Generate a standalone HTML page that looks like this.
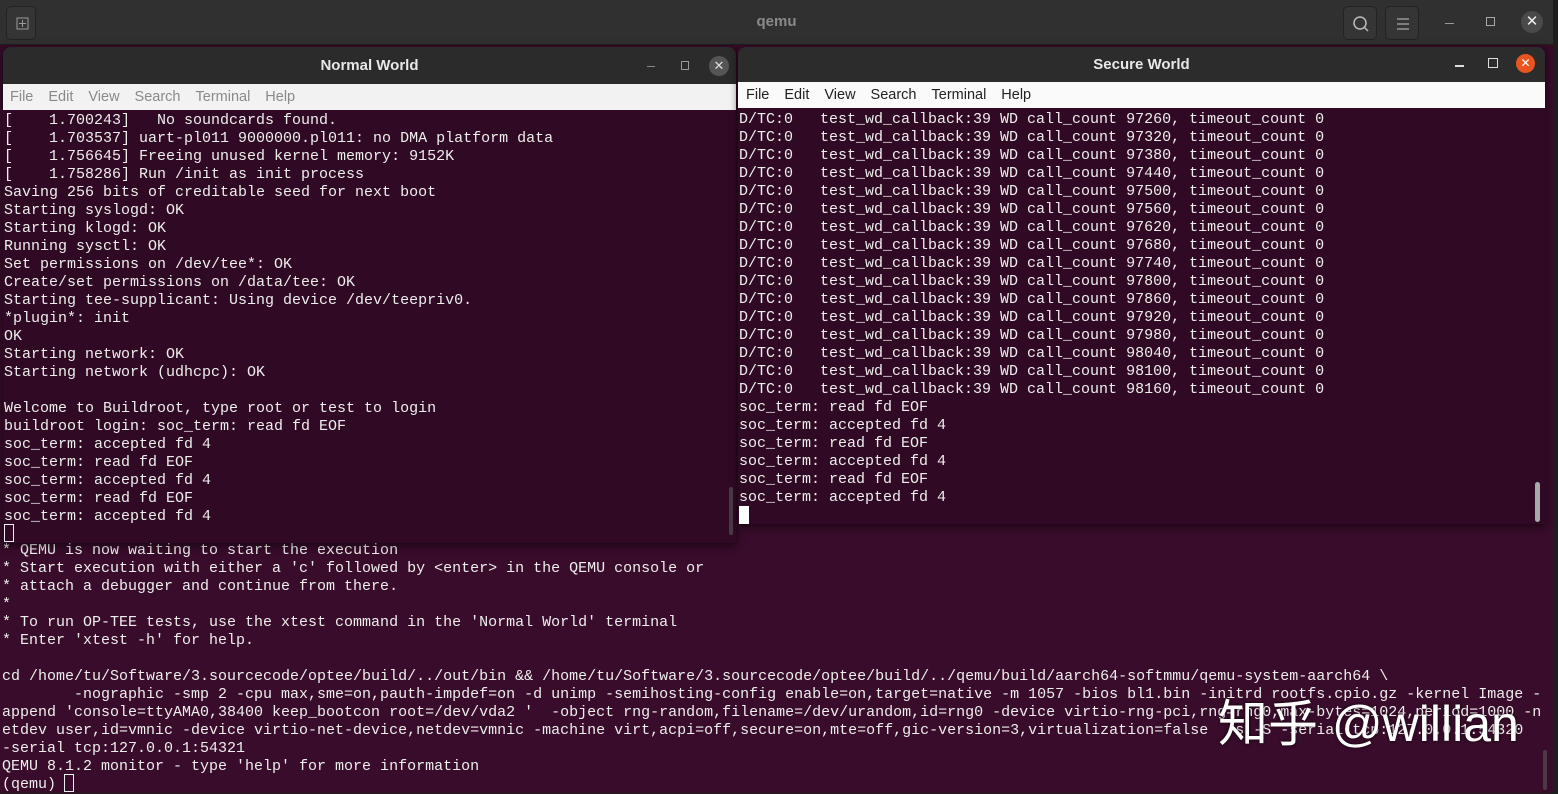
<!DOCTYPE html>
<html><head><meta charset="utf-8"><style>
*{margin:0;padding:0;box-sizing:border-box}
body{width:1558px;height:793px;overflow:hidden;background:#1e1e1e;position:relative;font-family:"Liberation Sans",sans-serif}
.mono{font-family:"Liberation Mono",monospace;font-size:15px;line-height:18px;color:#eeeeec;white-space:pre}
#outer{position:absolute;left:0;top:0;width:1553px;height:793px;background:#380c2a}
#otb{position:absolute;left:0;top:0;width:1553px;height:45px;background:#303030;border-bottom:1px solid #1f1f1f}
#otb .t{position:absolute;left:0;right:0;top:13px;text-align:center;color:#8a8a8a;font-weight:bold;font-size:15px}
.btn{position:absolute;top:6px;width:34px;height:34px;border:1px solid #232323;border-radius:5px;background:#353535}
#bg{position:absolute;left:2px;top:542px}
.win{position:absolute;background:#300a24;box-shadow:0 2px 8px rgba(0,0,0,.6)}
.tb{position:absolute;left:0;right:0;top:0;background:#2c2c2c;border-radius:8px 8px 0 0;text-align:center;color:#e8e8e8;font-weight:bold;font-size:15px}
.mb{position:absolute;left:0;right:0;font-size:15px;display:flex;gap:0}
.mb span{margin-right:15px}
.cur{position:absolute;width:10px;height:18px}
</style></head><body>
<div id="outer">
<div id="otb">
<div class="btn" style="left:6px;width:30px"><svg width="30" height="34"><rect x="10" y="11" width="11" height="11" fill="none" stroke="#9a9a9a" stroke-width="1"/><path d="M15.5 13v7M12 16.5h7" stroke="#9a9a9a"/></svg></div>
<div class="t">qemu</div>
<div class="btn" style="left:1343px"><svg width="34" height="34"><circle cx="16" cy="16" r="6" fill="none" stroke="#bbb" stroke-width="1.5"/><path d="M20 20l4 4" stroke="#bbb" stroke-width="1.5"/></svg></div>
<div class="btn" style="left:1385px"><svg width="34" height="34"><path d="M11 12h12M11 17h12M11 22h12" stroke="#aaa" stroke-width="1.3"/></svg></div>
<div style="position:absolute;left:1445px;top:23px;width:9px;height:1px;background:#999"></div>
<div style="position:absolute;left:1486px;top:17px;width:9px;height:9px;border:1px solid #aaa"></div>
<div style="position:absolute;left:1521px;top:11px;width:22px;height:22px;border-radius:50%;background:#4a4a4a;color:#eee;text-align:center;line-height:22px;font-size:15px">✕</div>
</div>
<div id="bg" class="mono">* QEMU is now waiting to start the execution
* Start execution with either a 'c' followed by &lt;enter&gt; in the QEMU console or
* attach a debugger and continue from there.
*
* To run OP-TEE tests, use the xtest command in the 'Normal World' terminal
* Enter 'xtest -h' for help.

cd /home/tu/Software/3.sourcecode/optee/build/../out/bin &amp;&amp; /home/tu/Software/3.sourcecode/optee/build/../qemu/build/aarch64-softmmu/qemu-system-aarch64 \
        -nographic -smp 2 -cpu max,sme=on,pauth-impdef=on -d unimp -semihosting-config enable=on,target=native -m 1057 -bios bl1.bin -initrd rootfs.cpio.gz -kernel Image -
append 'console=ttyAMA0,38400 keep_bootcon root=/dev/vda2 '  -object rng-random,filename=/dev/urandom,id=rng0 -device virtio-rng-pci,rng=rng0,max-bytes=1024,period=1000 -n
etdev user,id=vmnic -device virtio-net-device,netdev=vmnic -machine virt,acpi=off,secure=on,mte=off,gic-version=3,virtualization=false  -s -S -serial tcp:127.0.0.1:54320
-serial tcp:127.0.0.1:54321
QEMU 8.1.2 monitor - type 'help' for more information
(qemu) </div>
<div class="cur" style="left:64px;top:774px;border:1px solid #eee"></div>
<div style="position:absolute;left:1543px;top:750px;width:4px;height:40px;background:#4a3a45;border-radius:2px"></div>
</div>

<div class="win" style="left:3px;top:47px;width:733px;height:496px">
<div class="tb" style="height:37px;line-height:38px;background:#2b2b2b">Normal World
<div style="position:absolute;left:644px;top:19px;width:8px;height:1px;background:#888"></div>
<div style="position:absolute;left:678px;top:14px;width:8px;height:9px;border:1px solid #999"></div>
<div style="position:absolute;left:706px;top:9px;width:20px;height:20px;border-radius:50%;background:#555;color:#ddd;line-height:20px;font-size:13px;font-weight:normal">✕</div>
</div>
<div class="mb" style="top:37px;height:26px;background:#f2f2f2;color:#8a8a8a;padding:5px 0 0 7px;font-size:14.5px"><span>File</span><span>Edit</span><span>View</span><span>Search</span><span>Terminal</span><span>Help</span></div>
<div class="mono" style="position:absolute;left:1px;top:65px">[    1.700243]   No soundcards found.
[    1.703537] uart-pl011 9000000.pl011: no DMA platform data
[    1.756645] Freeing unused kernel memory: 9152K
[    1.758286] Run /init as init process
Saving 256 bits of creditable seed for next boot
Starting syslogd: OK
Starting klogd: OK
Running sysctl: OK
Set permissions on /dev/tee*: OK
Create/set permissions on /data/tee: OK
Starting tee-supplicant: Using device /dev/teepriv0.
*plugin*: init
OK
Starting network: OK
Starting network (udhcpc): OK

Welcome to Buildroot, type root or test to login
buildroot login: soc_term: read fd EOF
soc_term: accepted fd 4
soc_term: read fd EOF
soc_term: accepted fd 4
soc_term: read fd EOF
soc_term: accepted fd 4</div>
<div class="cur" style="left:1px;top:477px;border:1px solid #eee"></div>
<div style="position:absolute;left:726px;top:440px;width:4px;height:48px;background:#4a3a45;border-radius:2px"></div>
</div>

<div class="win" style="left:738px;top:47px;width:807px;height:477px">
<div class="tb" style="height:35px;line-height:35px;background:#2c2c2c">Secure World
<div style="position:absolute;left:717px;top:18px;width:9px;height:2px;background:#ddd"></div>
<div style="position:absolute;left:750px;top:11px;width:10px;height:10px;border:1.5px solid #ddd"></div>
<div style="position:absolute;left:778px;top:7px;width:19px;height:19px;border-radius:50%;background:#e95420;color:#fff;line-height:19px;font-size:12px;font-weight:normal">✕</div>
</div>
<div class="mb" style="top:35px;height:26px;background:#fafafa;color:#222;padding:5px 0 0 8px;font-size:14.5px"><span>File</span><span>Edit</span><span>View</span><span>Search</span><span>Terminal</span><span>Help</span></div>
<div class="mono" style="position:absolute;left:1px;top:64px">D/TC:0   test_wd_callback:39 WD call_count 97260, timeout_count 0
D/TC:0   test_wd_callback:39 WD call_count 97320, timeout_count 0
D/TC:0   test_wd_callback:39 WD call_count 97380, timeout_count 0
D/TC:0   test_wd_callback:39 WD call_count 97440, timeout_count 0
D/TC:0   test_wd_callback:39 WD call_count 97500, timeout_count 0
D/TC:0   test_wd_callback:39 WD call_count 97560, timeout_count 0
D/TC:0   test_wd_callback:39 WD call_count 97620, timeout_count 0
D/TC:0   test_wd_callback:39 WD call_count 97680, timeout_count 0
D/TC:0   test_wd_callback:39 WD call_count 97740, timeout_count 0
D/TC:0   test_wd_callback:39 WD call_count 97800, timeout_count 0
D/TC:0   test_wd_callback:39 WD call_count 97860, timeout_count 0
D/TC:0   test_wd_callback:39 WD call_count 97920, timeout_count 0
D/TC:0   test_wd_callback:39 WD call_count 97980, timeout_count 0
D/TC:0   test_wd_callback:39 WD call_count 98040, timeout_count 0
D/TC:0   test_wd_callback:39 WD call_count 98100, timeout_count 0
D/TC:0   test_wd_callback:39 WD call_count 98160, timeout_count 0
soc_term: read fd EOF
soc_term: accepted fd 4
soc_term: read fd EOF
soc_term: accepted fd 4
soc_term: read fd EOF
soc_term: accepted fd 4</div>
<div class="cur" style="left:1px;top:459px;background:#fff"></div>
<div style="position:absolute;left:797px;top:435px;width:5px;height:40px;background:#a9a9a9;border-radius:3px"></div>
</div>
</div>

<div style="position:absolute;left:1218px;top:694px;font-family:'Liberation Sans','Noto Sans CJK SC',sans-serif;font-size:50px;line-height:60px;color:#fff;text-shadow:0 0 3px rgba(0,0,0,.8);white-space:nowrap">知乎 @willian</div>
</body></html>
